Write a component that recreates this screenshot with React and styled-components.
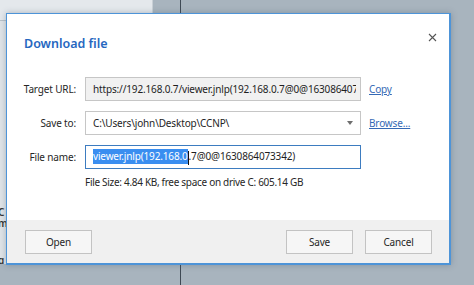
import React from 'react';
import styled, { createGlobalStyle } from 'styled-components';

const GlobalStyle = createGlobalStyle`
  html, body {
    margin: 0;
    padding: 0;
    background: #a8b4be;
  }
  body {
    font-family: "Noto Sans", "Open Sans", sans-serif;
  }
`;

const Desktop = styled.div`
  position: relative;
  width: 474px;
  height: 285px;
  overflow: hidden;
  background: #a8b4be;
`;

const BackWindow = styled.div`
  position: absolute;
  left: 0;
  top: 0;
  width: 152px;
  height: 263px;
  background: #e4e8ec;
  border-right: 1px solid #c9d0d6;
`;

const BackStrip = styled.div`
  position: absolute;
  left: 0;
  top: 20px;
  width: 6px;
  height: 243px;
  background: #dfe3e7;
  border-top: 1px solid #b9c1c8;
  overflow: hidden;
`;

const BackText = styled.div`
  position: absolute;
  left: -2px;
  top: ${(p) => p.$top}px;
  font-size: 10px;
  font-weight: 600;
  color: #333;
  line-height: 12px;
`;

const Divider = styled.div`
  position: absolute;
  left: 180px;
  top: 0;
  bottom: 0;
  width: 1px;
  background: #3e4954;
`;

const Dialog = styled.div`
  position: absolute;
  left: 6px;
  top: 13px;
  width: 442px;
  height: 249px;
  background: #fff;
  border: 1px solid #4d94d8;
  border-right-width: 2px;
  border-bottom-width: 2px;
  box-shadow: 0 0 6px rgba(60, 80, 100, 0.35);
  display: flex;
  flex-direction: column;
  font-size: 10px;
  letter-spacing: -0.15px;
  color: #1e1e1e;
`;

const Header = styled.div`
  display: flex;
  justify-content: space-between;
  align-items: flex-start;
  padding: 16px 12px 0 17px;
  height: 47px;
  box-sizing: border-box;
`;

const Title = styled.div`
  font-size: 12.5px;
  font-weight: 600;
  color: #2667bf;
  letter-spacing: 0;
  margin-top: 5px;
`;

const CloseButton = styled.div`
  width: 10px;
  height: 10px;
  margin-top: 2px;
  display: flex;
  align-items: center;
  justify-content: center;
`;

const Form = styled.div`
  display: flex;
  flex-direction: column;
  gap: 10px;
  padding-top: 16px;
`;

const Row = styled.div`
  display: flex;
  align-items: center;
  height: 24px;
`;

const Label = styled.div`
  width: 69px;
  text-align: right;
  padding-right: 9px;
  color: #262626;
`;

const Field = styled.div`
  position: relative;
  width: 276px;
  height: 24px;
  box-sizing: border-box;
  border: 1px solid ${(p) => (p.$focus ? '#3d7cc0' : '#c6c6c6')};
  background: ${(p) => (p.$readonly ? '#f1f1f1' : '#fff')};
  display: flex;
  align-items: center;
  padding: 0 4px 0 7px;
  overflow: hidden;
`;

const FieldText = styled.span`
  flex: 1;
  min-width: 0;
  overflow: hidden;
  white-space: nowrap;
`;

const Selected = styled.span`
  background: #3a8ef0;
  color: #fff;
  padding: 1px 0;
`;

const Caret = styled.span`
  display: inline-block;
  width: 1px;
  height: 14px;
  background: #111;
  vertical-align: middle;
`;

const Arrow = styled.div`
  flex: none;
  margin: 0 3px 0 6px;
  width: 0;
  height: 0;
  border-left: 3.5px solid transparent;
  border-right: 3.5px solid transparent;
  border-top: 4px solid #6e6e6e;
`;

const LinkText = styled.a`
  margin-left: 8px;
  color: #3569b5;
  text-decoration: underline;
  cursor: pointer;
`;

const Note = styled.div`
  padding-left: 78px;
  margin-top: 6px;
  color: #262626;
  letter-spacing: -0.3px;
`;

const Footer = styled.div`
  margin-top: auto;
  height: 43px;
  background: #f0f0f0;
  display: flex;
  align-items: center;
  padding: 0 17px 0 18px;
  gap: 12px;
`;

const Button = styled.div`
  width: 67px;
  height: 24px;
  box-sizing: border-box;
  border: 1px solid #c3c3c3;
  background: #f6f6f6;
  display: flex;
  align-items: center;
  justify-content: center;
  color: #262626;
  margin-left: ${(p) => (p.$push ? 'auto' : '0')};
`;

export default function App() {
  return (
    <>
      <GlobalStyle />
      <Desktop>
        <BackWindow />
        <BackStrip>
          <BackText $top={185}>C</BackText>
          <BackText $top={196}>m</BackText>
          <BackText $top={233}>g</BackText>
        </BackStrip>
        <Divider />
        <Dialog>
          <Header>
            <Title>Download file</Title>
            <CloseButton>
              <svg width="9" height="9" viewBox="0 0 9 9">
                <path d="M1 1 L8 8 M8 1 L1 8" stroke="#555" strokeWidth="1.1" />
              </svg>
            </CloseButton>
          </Header>
          <Form>
            <Row>
              <Label>Target URL:</Label>
              <Field $readonly>
                <FieldText>https://192.168.0.7/viewer.jnlp(192.168.0.7@0@1630864073342)</FieldText>
              </Field>
              <LinkText>Copy</LinkText>
            </Row>
            <Row>
              <Label>Save to:</Label>
              <Field>
                <FieldText>C:\Users\john\Desktop\CCNP\</FieldText>
                <Arrow />
              </Field>
              <LinkText>Browse...</LinkText>
            </Row>
            <Row>
              <Label>File name:</Label>
              <Field $focus>
                <FieldText>
                  <Selected>viewer.jnlp(192.168.0</Selected>
                  <Caret />
                  .7@0@1630864073342)
                </FieldText>
              </Field>
            </Row>
          </Form>
          <Note>File Size: 4.84 KB, free space on drive C: 605.14 GB</Note>
          <Footer>
            <Button>Open</Button>
            <Button $push>Save</Button>
            <Button>Cancel</Button>
          </Footer>
        </Dialog>
      </Desktop>
    </>
  );
}
